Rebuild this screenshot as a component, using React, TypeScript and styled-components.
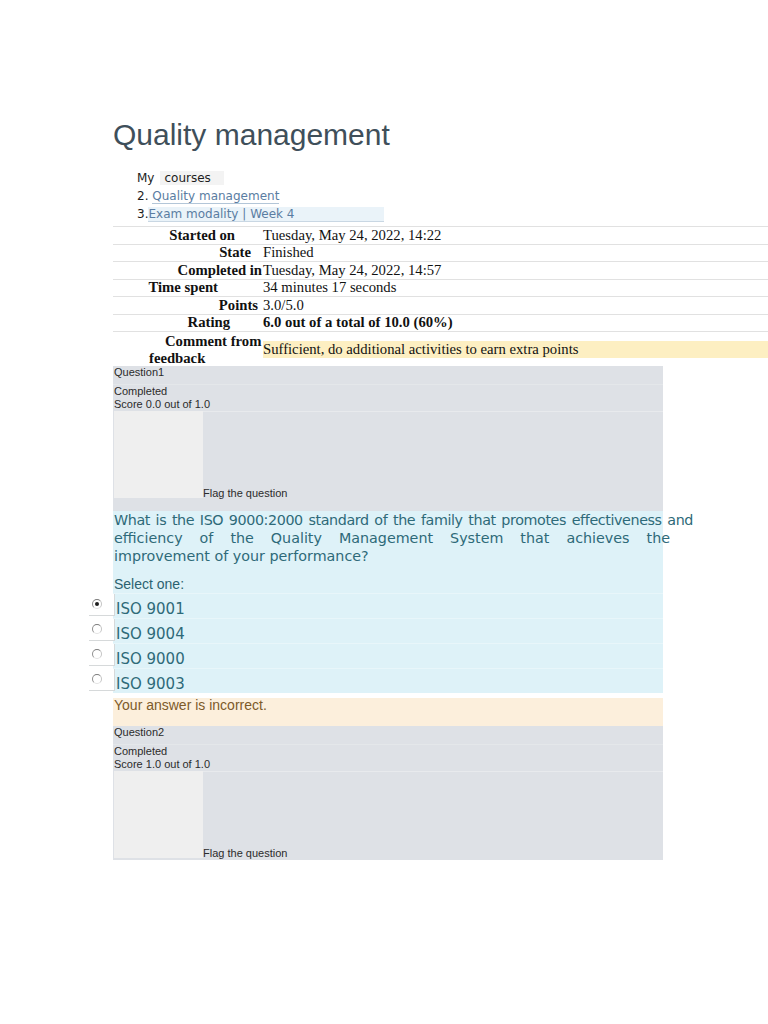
import { createGlobalStyle, styled } from "styled-components"

const GlobalStyle = createGlobalStyle`
  html, body {
    margin: 0;
    padding: 0;
    background: #fff;
  }
  body {
    font-family: "Liberation Sans", Arial, sans-serif;
  }
`

type InfoItem = {
    label: string;
    value: string;
    pr: number;
    bold?: boolean;
};

const info: InfoItem[] = [
    { label: "Started on", value: "Tuesday, May 24, 2022, 14:22", pr: 28 },
    { label: "State", value: "Finished", pr: 12 },
    { label: "Completed in", value: "Tuesday, May 24, 2022, 14:57", pr: 1 },
    { label: "Time spent", value: "34 minutes 17 seconds", pr: 45 },
    { label: "Points", value: "3.0/5.0", pr: 5 },
    { label: "Rating", value: "6.0 out of a total of 10.0 (60%)", pr: 33, bold: true },
]

const options = ["ISO 9001", "ISO 9004", "ISO 9000", "ISO 9003"]

const Page = styled.div`
  padding-top: 118px;
  padding-bottom: 160px;
`

const Content = styled.div`
  margin-left: 113px;
`

const Title = styled.h1`
  margin: 0;
  font-family: "Liberation Sans", Arial, sans-serif;
  font-weight: normal;
  font-size: 30px;
  line-height: 34px;
  color: #3f4f5a;
`

const Crumbs = styled.ol`
  list-style: none;
  margin: 17px 0 3px;
  padding: 0 0 0 24px;
  font-family: "DejaVu Sans", Verdana, sans-serif;
  font-size: 12px;
  line-height: 18px;
  color: #1d1d1d;
`

const Crumb = styled.li`
  white-space: nowrap;
`

const Courses = styled.span`
  margin-left: 6px;
  padding: 0 13px 0 4px;
  background: #f3f3f3;
`

const CrumbLink = styled.a<{ $boxed?: boolean }>`
  color: #5a7da2;
  text-decoration: none;
  display: inline-block;
  line-height: 14px;
  border-bottom: 1px solid ${p => (p.$boxed ? "#c9d7e3" : "#b3c6d8")};
  background: ${p => (p.$boxed ? "#eaf3f9" : "transparent")};
  padding-right: ${p => (p.$boxed ? "90px" : "0")};
`

const Info = styled.div`
  font-family: "Liberation Serif", "Times New Roman", serif;
  font-size: 14.7px;
  color: #111;
`

const InfoRow = styled.div<{ $h: number }>`
  display: flex;
  align-items: center;
  box-sizing: border-box;
  height: ${p => p.$h}px;
  border-top: 1px solid #e1e1e1;
  white-space: nowrap;
`

const Label = styled.div<{ $pr: number }>`
  flex: 0 0 150px;
  box-sizing: border-box;
  text-align: right;
  font-weight: bold;
  padding-right: ${p => p.$pr}px;
`

const LabelTwoLine = styled.div`
  flex: 0 0 150px;
  align-self: stretch;
  font-weight: bold;
  line-height: 17px;
  padding-top: 1px;
`

const LabelLine = styled.div<{ $pl: number }>`
  padding-left: ${p => p.$pl}px;
`

const Value = styled.div<{ $bold?: boolean }>`
  flex: 1;
  font-weight: ${p => (p.$bold ? "bold" : "normal")};
`

const Comment = styled.div`
  flex: 1;
  background: #fdefc2;
  line-height: 17px;
`

const QInfo = styled.div<{ $tail: number }>`
  width: 550px;
  background: #dee1e6;
  font-family: "Liberation Sans", Arial, sans-serif;
  font-size: 11px;
  color: #2b2b2b;
  padding-bottom: ${p => p.$tail}px;
`

const QHeader = styled.div`
  height: 18px;
  line-height: 12px;
  padding-left: 1px;
  border-bottom: 1px solid #e4e7ea;
`

const QState = styled.div`
  line-height: 13px;
  padding-left: 1px;
`

const FlagRow = styled.div`
  display: flex;
  height: 87px;
`

const FlagBox = styled.div`
  width: 89px;
  margin-left: 1px;
  background: #efefef;
`

const FlagText = styled.div`
  flex: 1;
  display: flex;
  align-items: flex-end;
  line-height: 9px;
  border-top: 1px solid #e8eaed;
`

const Formulation = styled.div`
  width: 550px;
  background: #def2f8;
  color: #2e6a79;
`

const QText = styled.div`
  padding-left: 1px;
  font-family: "DejaVu Sans", Verdana, sans-serif;
  font-size: 14.3px;
  line-height: 18px;
`

// each line of the question is set to the width it has in the source
const QLine = styled.div<{ $w?: number; $ls?: number }>`
  width: ${p => (p.$w ? `${p.$w}px` : "auto")};
  white-space: nowrap;
  letter-spacing: ${p => p.$ls ?? 0}px;
  text-align: ${p => (p.$w ? "justify" : "left")};
  text-align-last: ${p => (p.$w ? "justify" : "auto")};
`

const Prompt = styled.div`
  margin-top: 10px;
  padding-left: 1px;
  font-family: "Liberation Sans", Arial, sans-serif;
  font-size: 14px;
  line-height: 18px;
  color: #2c6270;
`

const OptionRow = styled.div`
  display: flex;
  align-items: flex-end;
  height: 25px;
  box-sizing: border-box;
  border-top: 1px solid #e8f6fa;
`

const RadioCell = styled.div`
  align-self: flex-start;
  width: 25px;
  height: 21px;
  margin-left: -24px;
  background: #fff;
  border-right: 1px solid #d6d9da;
  border-bottom: 1px solid #d6d9da;
  position: relative;
`

const Radio = styled.span<{ $checked?: boolean }>`
  position: absolute;
  left: 3px;
  top: 5px;
  width: 8px;
  height: 8px;
  border-radius: 50%;
  border: 1px solid;
  border-color: #7d7d7d #c4c4c4 #e2e2e2 #8f8f8f;
  background: #fff;

  &::after {
    content: "";
    display: ${p => (p.$checked ? "block" : "none")};
    position: absolute;
    left: 2px;
    top: 2px;
    width: 4px;
    height: 4px;
    border-radius: 50%;
    background: #1e1e1e;
  }
`

const OptionLabel = styled.span`
  margin-left: 1px;
  font-family: "DejaVu Sans", Verdana, sans-serif;
  font-size: 15px;
  line-height: 17px;
  color: #2e6a79;
`

const Outcome = styled.div`
  width: 549px;
  margin-top: 5px;
  height: 28px;
  padding-left: 1px;
  background: #fcefdc;
  color: #7d5a29;
  font-family: "Liberation Sans", Arial, sans-serif;
  font-size: 14px;
  line-height: 15px;
`

function QuestionInfo({ n, score, tail }: { n: number; score: string; tail: number }) {
    return (
        <QInfo $tail={tail}>
            <QHeader>Question{n}</QHeader>
            <QState>Completed</QState>
            <QState>Score {score} out of 1.0</QState>
            <FlagRow>
                <FlagBox />
                <FlagText>Flag the question</FlagText>
            </FlagRow>
        </QInfo>
    )
}

export default function App() {
    return (
        <Page>
            <GlobalStyle />
            <Content>
                <Title>Quality management</Title>
                <Crumbs>
                    <Crumb>My<Courses>courses</Courses></Crumb>
                    <Crumb>2. <CrumbLink href="#">Quality management</CrumbLink></Crumb>
                    <Crumb>3.<CrumbLink href="#" $boxed>Exam modality | Week 4</CrumbLink></Crumb>
                </Crumbs>

                <Info>
                    {info.map(row => (
                        <InfoRow key={row.label} $h={17.5}>
                            <Label $pr={row.pr}>{row.label}</Label>
                            <Value $bold={row.bold}>{row.value}</Value>
                        </InfoRow>
                    ))}
                    <InfoRow $h={35}>
                        <LabelTwoLine>
                            <LabelLine $pl={52}>Comment from</LabelLine>
                            <LabelLine $pl={36}>feedback</LabelLine>
                        </LabelTwoLine>
                        <Comment>Sufficient, do additional activities to earn extra points</Comment>
                    </InfoRow>
                </Info>

                <QuestionInfo n={1} score="0.0" tail={13} />
                <Formulation>
                    <QText>
                        <QLine $w={579} $ls={-0.4}>
                            What is the ISO 9000:2000 standard of the family that promotes effectiveness and
                        </QLine>
                        <QLine $w={556}>
                            efficiency of the Quality Management System that achieves the
                        </QLine>
                        <QLine>improvement of your performance?</QLine>
                    </QText>
                    <Prompt>Select one:</Prompt>
                    {options.map((opt, i) => (
                        <OptionRow key={opt}>
                            <RadioCell>
                                <Radio $checked={i === 0} />
                            </RadioCell>
                            <OptionLabel>{opt}</OptionLabel>
                        </OptionRow>
                    ))}
                </Formulation>
                <Outcome>Your answer is incorrect.</Outcome>
                <QuestionInfo n={2} score="1.0" tail={2} />
            </Content>
        </Page>
    )
}
